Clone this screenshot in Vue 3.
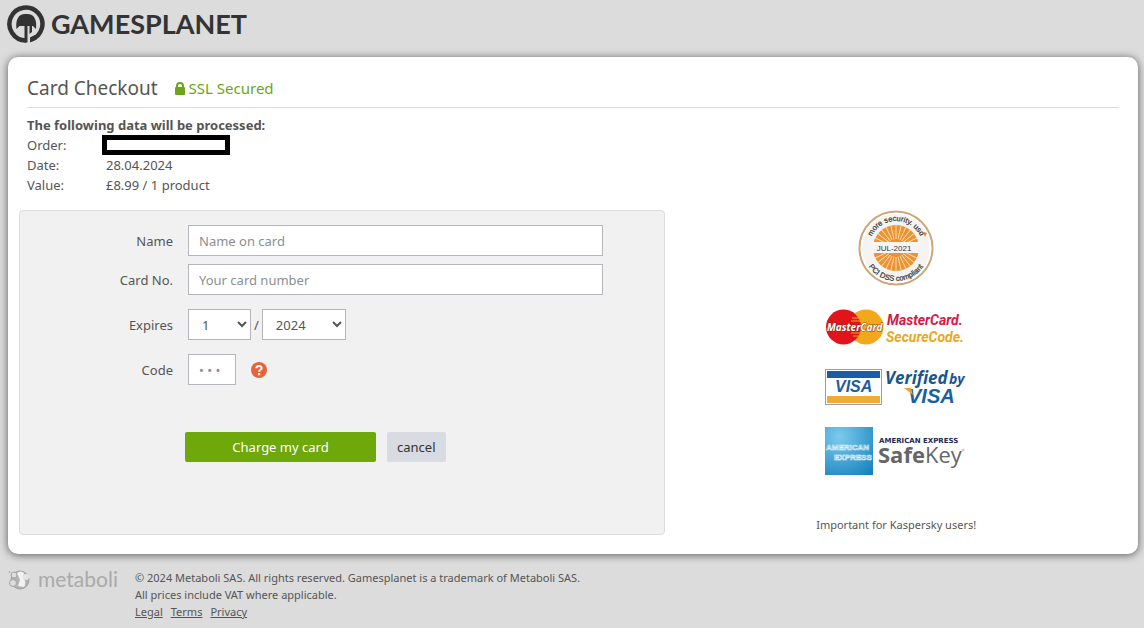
<template>
  <div class="page">
    <header class="site-header">
      <svg class="logo-mark" viewBox="0 0 38 38" aria-hidden="true">
        <path d="M19 35.5A16.500 16.500 0 1 1 24 34.700" fill="none" stroke="#333" stroke-width="4.500" />
        <path fill="#333" d="M17.500 9v28.500h3V9z" />
        <path fill="#333" d="M18.500 9C11 9 8.500 15 9.500 24l3-3h6z" />
        <path fill="#333" d="M20 9c7.500 0 10 6 9 15l-3-3h-1v6l-2.500 2V21H20z" />
        <path fill="#333" d="M23 32.500l5-2.500 2 4-7 3.500z" />
      </svg>
      <span class="logo-text">GAMESPLANET</span>
    </header>

    <main class="card">
      <div class="card-header">
        <h1>Card Checkout</h1>
        <span class="ssl">
          <svg viewBox="0 0 10 13" aria-hidden="true">
            <path d="M2 6V4a3 3 0 0 1 6 0v2" fill="none" stroke="#6aa51c" stroke-width="2" />
            <rect y="5" width="10" height="8" rx="1" fill="#6aa51c" />
          </svg>
          SSL Secured
        </span>
      </div>

      <section class="summary">
        <strong>The following data will be processed:</strong>
        <dl>
          <dt>Order:</dt>
          <dd><span class="redacted"></span></dd>
          <dt>Date:</dt>
          <dd>28.04.2024</dd>
          <dt>Value:</dt>
          <dd>£8.99 / 1 product</dd>
        </dl>
      </section>

      <div class="columns">
        <form class="panel" @submit.prevent>
          <div class="row">
            <label for="name">Name</label>
            <input id="name" v-model="form.name" type="text" placeholder="Name on card" />
          </div>
          <div class="row">
            <label for="number">Card No.</label>
            <input id="number" v-model="form.number" type="text" placeholder="Your card number" />
          </div>
          <div class="row row-spaced">
            <label for="month">Expires</label>
            <div class="expires">
              <select id="month" v-model="form.month" class="month">
                <option v-for="m in 12" :key="m" :value="m">{{ m }}</option>
              </select>
              <span>/</span>
              <select v-model="form.year" class="year" aria-label="Year">
                <option v-for="y in years" :key="y" :value="y">{{ y }}</option>
              </select>
            </div>
          </div>
          <div class="row row-spaced">
            <label for="code">Code</label>
            <div class="code">
              <input id="code" v-model="form.code" type="text" placeholder="• • •" maxlength="4" />
              <button type="button" class="help" aria-label="Help">
                <svg viewBox="0 0 16 16" aria-hidden="true">
                  <circle cx="8" cy="8" r="8" fill="#e8633a" />
                  <path d="M5.4 6.2C5.5 3.2 10.7 3.2 10.6 6.2 10.5 7.8 8.2 7.8 8.1 9.8" fill="none" stroke="#fff" stroke-width="2" />
                  <rect x="7" y="11" width="2.2" height="2.2" fill="#fff" />
                </svg>
              </button>
            </div>
          </div>
          <div class="actions">
            <button type="submit" class="btn btn-primary">Charge my card</button>
            <button type="button" class="btn btn-cancel">cancel</button>
          </div>
        </form>

        <aside class="seals">
          <svg class="seal-pci" viewBox="0 0 76 76" role="img" aria-label="PCI DSS compliant">
            <defs>
              <path id="arc-top" d="M11 38a27 27 0 0 1 54 0" />
              <path id="arc-bottom" d="M5 38a33 33 0 0 0 66 0" />
            </defs>
            <circle cx="38" cy="38" r="36.5" fill="#f5f3f1" stroke="#cfa57a" stroke-width="2" />
            <circle cx="38" cy="38" r="34.5" fill="none" stroke="#fff" stroke-width="1.5" />
            <circle cx="38" cy="38" r="23" fill="#ee912f" />
            <g stroke="#fbdcb4" stroke-width="1">
              <line
                v-for="i in 28"
                :key="i"
                x1="38"
                y1="29"
                x2="38"
                y2="15"
                :transform="`rotate(${i * (360 / 28)} 38 38)`"
              />
            </g>
            <rect x="13" y="32" width="50" height="11" fill="#f7f5f3" />
            <text x="36" y="41" text-anchor="middle" font-size="8" fill="#333">JUL-2021</text>
            <text font-size="7.500" fill="#333" stroke="#333" stroke-width=".2">
              <textPath href="#arc-top" startOffset="50%" text-anchor="middle">more security. usd</textPath>
            </text>
            <text font-size="7.500" fill="#333" stroke="#333" stroke-width=".2">
              <textPath href="#arc-bottom" startOffset="50%" text-anchor="middle">PCI DSS compliant</textPath>
            </text>
            <path d="M65 22l4 1-2 4z" fill="#e8832a" />
          </svg>

          <svg class="seal-mc" viewBox="0 0 142 38" role="img" aria-label="MasterCard SecureCode">
            <circle cx="41" cy="19" r="17.5" fill="#f3a81c" />
            <circle cx="18.5" cy="19" r="17.5" fill="#e3131b" />
            <path d="M27 10h8M26 13h9M26 25h9M28 28h7" stroke="#f3a81c" stroke-width="1" />
            <text x="2" y="23" class="sans" font-size="10" font-weight="700" font-style="italic" fill="#fff" stroke="#7c3420" stroke-width="1" paint-order="stroke">MasterCard</text>
            <text x="62" y="17" class="dense" font-size="14" font-weight="700" font-style="italic" fill="#d81845">MasterCard.</text>
            <text x="61" y="34" class="dense" font-size="14" font-weight="700" font-style="italic" fill="#eaa720">SecureCode.</text>
          </svg>

          <svg class="seal-visa" viewBox="0 0 142 38" role="img" aria-label="Verified by VISA">
            <rect x=".5" y="1.5" width="56" height="35" fill="#fff" stroke="#8ba3b5" />
            <path d="M2 3h53v7H2z" fill="#1c5ca6" />
            <path d="M2 28h53v7H2z" fill="#f2ac33" />
            <text x="10" y="24" font-size="16" font-weight="700" font-style="italic" fill="#1c5ca6">VISA</text>
            <text x="60" y="16" class="sans" font-size="17" font-weight="700" font-style="italic" fill="#18568f">Verified</text>
            <text x="124" y="16" class="sans" font-size="14" font-weight="700" font-style="italic" fill="#18568f">by</text>
            <text x="83" y="35" font-size="20" font-weight="700" font-style="italic" fill="#18609f">VISA</text>
            <path d="M79 20h7l2 7z" fill="#f2a13a" />
          </svg>

          <svg class="seal-amex" viewBox="0 0 142 50" role="img" aria-label="American Express SafeKey">
            <defs>
              <radialGradient id="amex" cx=".3" cy=".2" r="1">
                <stop offset="0" stop-color="#7ccbed" />
                <stop offset="1" stop-color="#1681bd" />
              </radialGradient>
            </defs>
            <rect y="1" width="48" height="48" fill="url(#amex)" />
            <text x="1" y="24" font-size="8" font-weight="700" fill="#3e9fd0" stroke="#e8f6fc" stroke-width=".6">AMERICAN</text>
            <text x="9" y="34" font-size="8" font-weight="700" fill="#3e9fd0" stroke="#e8f6fc" stroke-width=".6">EXPRESS</text>
            <text x="54" y="17" class="wide" font-size="7" font-weight="700" fill="#22284f">AMERICAN EXPRESS</text>
            <text x="53" y="37" class="sans" font-size="22" fill="#666"><tspan font-weight="700">Safe</tspan>Key</text>
            <circle cx="138" cy="24" r="1" fill="none" stroke="#888" stroke-width=".5" />
          </svg>

          <p>Important for Kaspersky users!</p>
        </aside>
      </div>
    </main>

    <footer class="site-footer">
      <div class="metaboli">
        <svg viewBox="0 0 24 22" aria-hidden="true">
          <circle cx="12" cy="11" r="9" fill="#b3b3b3" stroke="#a0a0a0" />
          <circle cx="5" cy="14" r="3.5" fill="#ddd" stroke="#a5a5a5" />
          <circle cx="6" cy="6" r="3" fill="#ddd" stroke="#a5a5a5" />
          <path d="M9 4q4-3 7 0l-1 5q4 4 1 9l-6-1 2-6z" fill="#f2f2f2" />
          <circle cx="18" cy="8" r="3" fill="#e4e4e4" />
          <circle cx="1.5" cy="3" r="1" fill="#b5b5b5" />
        </svg>
        <span>metaboli</span>
      </div>
      <div class="legal">
        <p>© 2024 Metaboli SAS. All rights reserved. Gamesplanet is a trademark of Metaboli SAS.</p>
        <p>All prices include VAT where applicable.</p>
        <nav>
          <a v-for="link in links" :key="link" href="#">{{ link }}</a>
        </nav>
      </div>
    </footer>
  </div>
</template>

<script setup>
import { reactive } from 'vue'

const form = reactive({
  name: '',
  number: '',
  month: 1,
  year: 2024,
  code: ''
})

const years = Array.from({ length: 12 }, (_, i) => 2024 + i)
const links = ['Legal', 'Terms', 'Privacy']
</script>

<style>
body {
  margin: 0;
  background: #dcdcdc;
}
</style>

<style scoped>
.page {
  font-family: "Noto Sans", "Open Sans", sans-serif;
  font-size: 13px;
  line-height: 20px;
  color: #555;
}

.page * {
  box-sizing: border-box;
}

.site-header {
  display: flex;
  align-items: center;
  gap: 6px;
  height: 57px;
  padding: 0 7px 10px;
}

.logo-mark {
  width: 38px;
  height: 38px;
}

.logo-text {
  font-family: Lato, sans-serif;
  font-size: 27px;
  font-weight: 700;
  color: #333;
}

.card {
  margin: 0 6px 0 8px;
  padding: 19px 11px;
  background: #fff;
  border-radius: 10px;
  box-shadow: 0 1px 8px rgba(0, 0, 0, 0.6);
}

.card-header {
  display: flex;
  align-items: center;
  gap: 17px;
  margin: 0 8px;
  padding-bottom: 7px;
  border-bottom: 1px solid #ddd;
}

h1 {
  margin: 0;
  font-size: 19px;
  font-weight: 400;
  line-height: 24px;
}

.ssl {
  display: flex;
  align-items: center;
  gap: 4px;
  font-size: 15px;
  color: #6aa51c;
}

.ssl svg {
  width: 10px;
  height: 13px;
}

.summary {
  margin: 7px 8px 15px;
}

.summary strong {
  display: block;
}

dl {
  display: grid;
  grid-template-columns: 79px 1fr;
  margin: 0;
}

dd {
  margin: 0;
}

.redacted {
  display: block;
  width: 128px;
  height: 20px;
  margin-left: -4px;
  border: 5px solid #000;
  background: #fff;
}

.columns {
  display: grid;
  grid-template-columns: 7fr 5fr;
}

.panel {
  min-height: 325px;
  padding: 14px 61px 14px 0;
  background: #f1f1f1;
  border: 1px solid #ddd;
  border-radius: 4px;
}

.row {
  display: grid;
  grid-template-columns: 153px 1fr;
  align-items: center;
  gap: 15px;
  margin-bottom: 8px;
}

.row-spaced {
  margin: 14px 0;
}

.row label {
  text-align: right;
}

input,
select {
  height: 31px;
  margin: 0;
  border: 1px solid #b5b5bb;
  border-radius: 0;
  background: #fff;
  color: #555;
  font: inherit;
}

input {
  width: 100%;
  padding: 0 10px;
}

input::placeholder {
  color: #8b8f94;
}

select {
  padding: 0 0 0 9px;
}

.expires,
.code {
  display: flex;
  align-items: center;
}

.expires {
  gap: 3px;
}

.month {
  width: 63px;
}

.year {
  width: 84px;
}

.code {
  gap: 15px;
}

.code input {
  width: 48px;
}

.help {
  width: 16px;
  height: 16px;
  padding: 0;
  border: 0;
  background: none;
  cursor: pointer;
}

.help svg {
  display: block;
}

.actions {
  display: flex;
  gap: 11px;
  margin: 47px 0 0 165px;
}

.btn {
  height: 30px;
  padding: 0 10px;
  border: 0;
  border-radius: 2px;
  font: inherit;
  cursor: pointer;
}

.btn-primary {
  width: 191px;
  background: #6ea80b;
  color: #fff;
}

.btn-cancel {
  background: #d8dbe2;
  color: #333;
}

.seals {
  display: flex;
  flex-direction: column;
  align-items: center;
  font-size: 11px;
}

.seals svg {
  font-family: "Liberation Sans", Arial, sans-serif;
  overflow: visible;
}

.seal-pci {
  width: 76px;
  height: 76px;
}

.seal-mc,
.seal-visa {
  width: 142px;
  height: 38px;
  margin-top: 22px;
}

.seal-amex {
  width: 142px;
  height: 50px;
  margin-top: 20px;
}

.seals .sans {
  font-family: "Open Sans", sans-serif;
}

.seals .dense {
  font-family: Roboto, sans-serif;
}

.seals .wide {
  font-family: "DejaVu Sans", sans-serif;
}

.seals p {
  margin: 39px 0 0;
}

.site-footer {
  display: flex;
  gap: 14px;
  padding: 15px 8px 8px;
  font-size: 11px;
  line-height: 17px;
}

.metaboli {
  display: flex;
  gap: 6px;
  width: 113px;
  font-family: Lato, sans-serif;
  font-size: 21px;
  line-height: 20px;
  color: #aaa;
}

.metaboli svg {
  width: 24px;
  height: 22px;
}

.legal p {
  margin: 0;
}

.legal nav {
  display: flex;
  gap: 8px;
}

.legal a {
  color: inherit;
}
</style>
